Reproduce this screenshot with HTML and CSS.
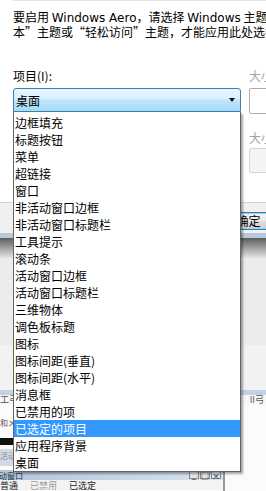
FILE: index.html
```html
<!DOCTYPE html>
<html lang="zh-CN">
<head>
<meta charset="utf-8">
<link rel="stylesheet" href="styles.css">
</head>
<body>
<div class="page">
  <section class="dialog">
    <p class="note">要启用 <span class="lat">Windows Aero</span>，请选择 <span class="lat">Windows</span> 主题。若要选择“Windows 7 基<br>本”主题或“轻松访问”主题，才能应用此处选择的颜色、字体和大小。</p>
    <div class="fields">
      <div class="col-main">
        <div class="label">项目(I):</div>
        <div class="combo-wrap">
          <div class="combo"><span>桌面</span><span class="arrow"></span></div>
          <ul class="list">
            <li>边框填充</li>
            <li>标题按钮</li>
            <li>菜单</li>
            <li>超链接</li>
            <li>窗口</li>
            <li>非活动窗口边框</li>
            <li>非活动窗口标题栏</li>
            <li>工具提示</li>
            <li>滚动条</li>
            <li>活动窗口边框</li>
            <li>活动窗口标题栏</li>
            <li>三维物体</li>
            <li>调色板标题</li>
            <li>图标</li>
            <li>图标间距(垂直)</li>
            <li>图标间距(水平)</li>
            <li>消息框</li>
            <li>已禁用的项</li>
            <li class="selected">已选定的项目</li>
            <li>应用程序背景</li>
            <li>桌面</li>
          </ul>
        </div>
      </div>
      <div class="col-side">
        <div class="label dim">大小(Z):</div>
        <div class="box"></div>
        <div class="label dim second">大小(E):</div>
        <div class="box disabled"></div>
      </div>
    </div>
  </section>
  <div class="button-row">
    <button class="btn default">确定</button>
  </div>
  <div class="frame-edge"></div>
  <div class="shadow"></div>
  <div class="backdrop"></div>
  <div class="ruler-band"></div>
  <div class="ruler"><span>工弓</span><span>ΙΙ弓</span></div>
  <div class="preview">
    <div class="frag-text">和ㄨ</div>
    <div class="frag-bar"></div>
    <div class="frag-inactive">活动</div>
    <div class="pv-win">
      <div class="pv-title"><span class="pv-title-text">活动窗口</span><span class="caps"><i>_</i><i>□</i><i>×</i></span></div>
      <div class="pv-menu"><span>普通</span><span class="dis">已禁用</span><span>已选定</span></div>
    </div>
  </div>
</div>
</body>
</html>
```
FILE: styles.css
```css
html, body {
  margin: 0;
  padding: 0;
  overflow: hidden;
  background: #fff;
}
body {
  font-family: "Noto Sans CJK SC", "Noto Sans", sans-serif;
  font-size: 12px;
  color: #000;
}
.page {
  width: 266px;
  height: 491px;
  overflow: hidden;
  white-space: nowrap;
}
.dialog {
  height: 203px;
  box-sizing: border-box;
  border-bottom: 1px solid #d5d5d5;
  background: #fff;
}
.note {
  margin: 0 0 0 13px;
  border-top: 1px solid #e3e3e3;
  padding-top: 9px;
  line-height: 14px;
}
.lat {
  font-family: "DejaVu Sans", "Noto Sans CJK SC", sans-serif;
}
.fields {
  display: flex;
  gap: 8px;
  padding-left: 13px;
  margin-top: 29px;
}
.col-main {
  width: 228px;
  flex: none;
  display: flex;
  flex-direction: column;
}
.col-side {
  width: 60px;
  flex: none;
  display: flex;
  flex-direction: column;
}
.label {
  height: 15px;
  line-height: 15px;
}
.label.dim {
  color: #a3a3a3;
}
.label.second {
  margin-top: 16px;
}
.combo-wrap {
  position: relative;
  margin-top: 5px;
}
.combo {
  height: 24px;
  box-sizing: border-box;
  border: 1px solid #3c7fb1;
  border-radius: 3px 3px 0 0;
  background: linear-gradient(#eaf6fd, #d9f0fc 45%, #bee6fd 50%, #a7d9f5);
  display: flex;
  align-items: center;
  justify-content: space-between;
  padding: 0 5px 0 2px;
}
.arrow {
  width: 0;
  height: 0;
  border-left: 3.5px solid transparent;
  border-right: 3.5px solid transparent;
  border-top: 4px solid #111;
}
.list {
  position: absolute;
  top: 100%;
  left: 0;
  width: 228px;
  box-sizing: border-box;
  margin: 0;
  padding: 2px 0 0;
  list-style: none;
  background: #fff;
  border: 1px solid #646464;
  border-top: none;
  box-shadow: 2px 2px 2px rgba(0, 0, 0, 0.35);
  z-index: 5;
}
.list li {
  height: 17px;
  line-height: 17px;
  padding-left: 1px;
}
.list li.selected {
  background: #3399ff;
  color: #fff;
}
.box {
  margin-top: 5px;
  height: 26px;
  box-sizing: border-box;
  border: 1px solid #abadb3;
  border-radius: 2px;
  background: #fff;
}
.box.disabled {
  margin-top: 3px;
  height: 25px;
  background: #f4f4f4;
  border-color: #d5d5d5;
}
.button-row {
  height: 30px;
  box-sizing: border-box;
  padding: 9px 0 0 211px;
  background: #f0f0f0;
}
.btn {
  width: 75px;
  height: 18px;
  padding: 0;
  font: inherit;
  font-size: 12px;
  line-height: 14px;
  color: #000;
  border: 1px solid #3c7fb1;
  border-radius: 3px;
  background: linear-gradient(#f4f4f4, #ebebeb 50%, #dddddd 50%, #cfcfcf);
  box-shadow: inset 0 0 0 1px #8fd3f5;
}
.frame-edge {
  height: 5px;
  background: #b7c9dc;
}
.shadow {
  height: 20px;
  background: linear-gradient(#5c5c5c, #e6e6e6);
}
.backdrop {
  height: 132px;
  background: linear-gradient(#ececec, #ececec 66%, #f2f2f2 66%);
}
.ruler-band {
  height: 5px;
  background: #c0d2e5;
}
.ruler {
  height: 10px;
  display: flex;
  justify-content: space-between;
  padding-right: 2px;
  font-size: 9px;
  line-height: 10px;
  color: #555;
  background: #f7f7f7;
}
.preview {
  height: 86px;
  background: #fbfbfb;
  display: flex;
  flex-direction: column;
}
.frag-text {
  margin-top: 13px;
  height: 10px;
  font-size: 8px;
  line-height: 10px;
  color: #555;
}
.frag-bar {
  margin-top: 10px;
  width: 13px;
  height: 7px;
  background: #111;
}
.frag-inactive {
  margin-top: 4px;
  width: 13px;
  height: 17px;
  font-size: 8px;
  line-height: 14px;
  color: #7d8ca2;
  background: #d3dae3;
  overflow: hidden;
}
.pv-win {
  margin-top: 4px;
  width: 225px;
  box-sizing: border-box;
  border-right: 2px solid #9a9a9a;
  flex: 1;
}
.pv-title {
  height: 10px;
  display: flex;
  align-items: center;
  justify-content: space-between;
  padding-right: 2px;
  background: linear-gradient(to right, #b3c6dc, #d9e4f0);
  font-size: 8px;
  color: #233;
}
.pv-title-text {
  margin-left: -9px;
}
.caps {
  display: flex;
  gap: 1px;
}
.caps i {
  font-style: normal;
  width: 10px;
  height: 8px;
  line-height: 8px;
  font-size: 8px;
  text-align: center;
  background: #e4e4e4;
  border: 1px solid #888;
  box-sizing: border-box;
  color: #000;
}
.pv-menu {
  height: 10px;
  display: flex;
  gap: 12px;
  font-size: 9px;
  line-height: 12px;
  background: #f3f3f3;
  color: #222;
}
.pv-menu .dis {
  color: #9a9a9a;
}
```
